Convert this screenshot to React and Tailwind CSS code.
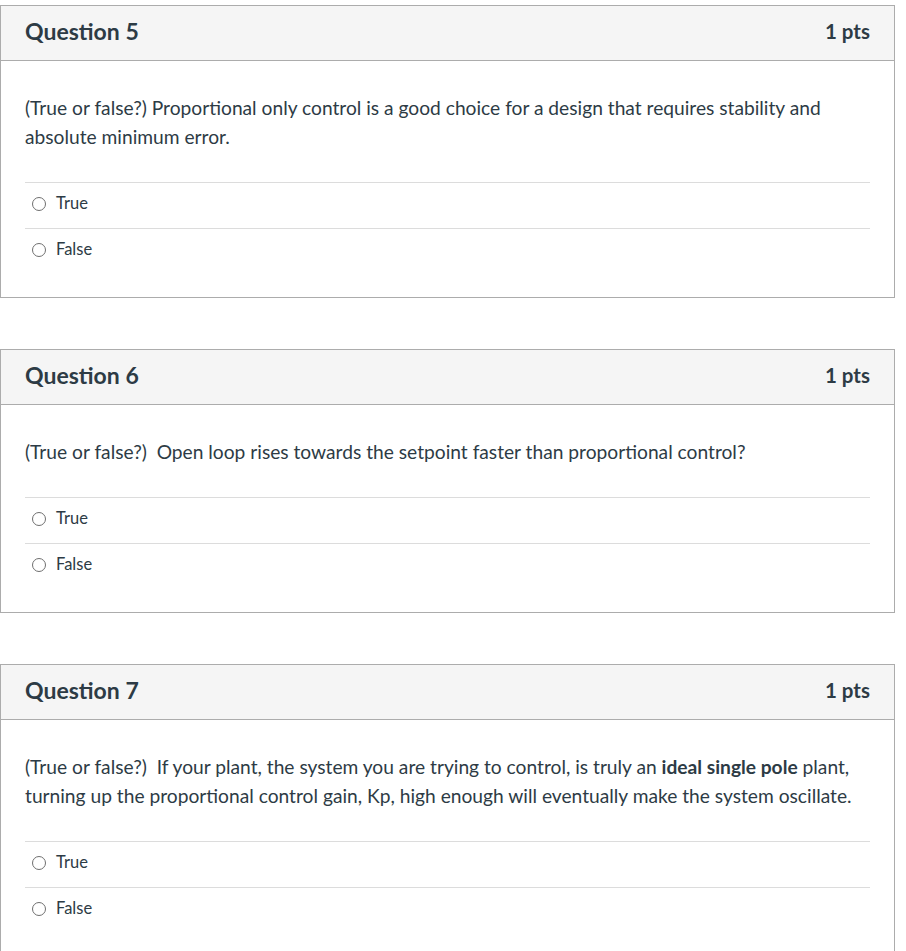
import React from "react";

const questions = [
  {
    num: 5,
    text: (
      <>
        (True or false?) Proportional only control is a good choice for a design that requires stability and absolute minimum error.
      </>
    ),
  },
  {
    num: 6,
    text: <>(True or false?)&nbsp; Open loop rises towards the setpoint faster than proportional control?</>,
  },
  {
    num: 7,
    text: (
      <>
        (True or false?)&nbsp; If your plant, the system you are trying to control, is truly an{" "}
        <strong className="font-bold">ideal single pole</strong> plant, turning up the proportional control gain, Kp, high enough will eventually make the system oscillate.
      </>
    ),
  },
];

function Radio() {
  return <span className="inline-block w-[14px] h-[14px] rounded-full border border-[#6f6f6f] bg-white shrink-0" />;
}

function Question({ num, text }) {
  return (
    <div className="w-[895px] border border-[#acacac] bg-white">
      <div className="h-[55px] bg-[#f5f5f5] border-b border-[#acacac] px-6 pb-[3px] flex items-center justify-between">
        <span className="text-[23px] font-bold text-[#2d3b45] leading-none">Question {num}</span>
        <span className="text-[20.5px] font-bold text-[#2d3b45] leading-none">1 pts</span>
      </div>
      <div className="px-6 pt-[32px] pb-[23px]">
        <p className="text-[19.2px] leading-[29px] text-[#2d3b45] pr-4">{text}</p>
        <div className="mt-[31px]">
          {["True", "False"].map((a) => (
            <div key={a} className="h-[46px] border-t border-[#dcdcdc] flex items-center pl-[7px] gap-[10px] pb-[4px]">
              <Radio />
              <span className="text-[16.5px] text-[#2d3b45] leading-none">{a}</span>
            </div>
          ))}
        </div>
      </div>
    </div>
  );
}

export default function App() {
  return (
    <div className="bg-white min-h-screen pt-[5px] flex flex-col gap-[51px]" style={{ fontFamily: "Lato, 'Noto Sans', sans-serif" }}>
      {questions.map((q) => (
        <Question key={q.num} {...q} />
      ))}
    </div>
  );
}
